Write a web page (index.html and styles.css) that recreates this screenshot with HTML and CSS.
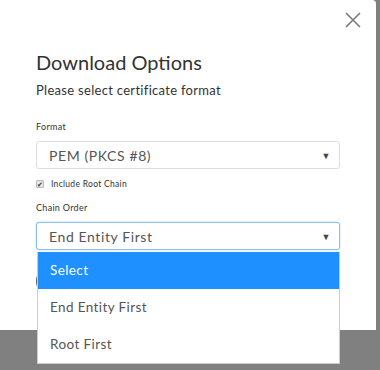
FILE: index.html
```html
<!DOCTYPE html>
<html lang="en">
<head>
    <meta charset="UTF-8">
    <title>Download Options</title>
    <link rel="stylesheet" href="styles.css">
</head>
<body>
    <div class="modal">
        <button class="close" aria-label="Close">
            <svg width="16" height="16" viewBox="0 0 16 16">
                <path d="M1 1 L15 15 M15 1 L1 15" stroke="#7a7a7a" stroke-width="1.6" fill="none"/>
            </svg>
        </button>

        <h1>Download Options</h1>
        <p class="subtitle">Please select certificate format</p>

        <div class="form-group">
            <label class="field-label">Format</label>
            <div class="select">
                <span>PEM (PKCS #8)</span>
                <span class="arrow">&#9660;</span>
            </div>
        </div>

        <label class="check">
            <span class="box">&#10004;</span>
            Include Root Chain
        </label>

        <div class="form-group">
            <label class="field-label">Chain Order</label>
            <div class="select-wrap">
                <div class="select focused">
                    <span>End Entity First</span>
                    <span class="arrow">&#9660;</span>
                </div>
                <ul class="options">
                    <li class="active">Select</li>
                    <li>End Entity First</li>
                    <li>Root First</li>
                </ul>
            </div>
        </div>

        <!-- download button sits under the open dropdown -->
        <div class="actions">
            <button class="btn" aria-label="Download"></button>
        </div>
    </div>
</body>
</html>
```

FILE: styles.css
```css
* {
    box-sizing: border-box;
    margin: 0;
    padding: 0;
}

html,
body {
    height: 100%;
}

body {
    background-color: #808080;
    font-family: 'Lato', 'Open Sans', sans-serif;
    color: #333;
}

.modal {
    position: relative;
    width: 376px;
    height: 330px;
    background: white;
    border-top-right-radius: 4px;
    padding: 49px 36px 0 36px;
}

.close {
    position: absolute;
    top: 12px;
    right: 15px;
    border: none;
    background: none;
    cursor: pointer;
}

h1 {
    font-size: 20px;
    font-weight: 400;
    color: #333;
    line-height: 26px;
}

.subtitle {
    margin-top: 7px;
    font-size: 13px;
    letter-spacing: 0.3px;
    color: #333;
    margin-bottom: 23px;
}

.field-label {
    display: block;
    font-size: 9px;
    letter-spacing: 0.3px;
    color: #333;
    margin-bottom: 9px;
}

.select {
    height: 28px;
    width: 304px;
    border: 1px solid #ddd;
    border-radius: 3px;
    padding: 0 8px 0 12px;
    display: flex;
    align-items: center;
    justify-content: space-between;
    font-size: 14px;
    letter-spacing: 0.6px;
    color: #555;
    background: white;
}

.select.focused {
    border: 1px solid #8ebfee;
    box-shadow: 0 0 2px rgba(102, 175, 233, 0.6);
}

.arrow {
    font-size: 9px;
    color: #444;
}

.check {
    display: flex;
    align-items: center;
    gap: 7px;
    font-size: 8.5px;
    letter-spacing: 0.3px;
    color: #333;
    margin: 10px 0 13px;
}

.box {
    width: 8px;
    height: 8px;
    border: 1px solid #bbb;
    background: #e6e6e6;
    border-radius: 1px;
    font-size: 7px;
    line-height: 7px;
    text-align: center;
    color: #333;
}

.select-wrap {
    position: relative;
}

.options {
    position: absolute;
    top: 30px;
    left: 1px;
    width: 303px;
    list-style: none;
    background: white;
    border: 1px solid #ccc;
    border-top: none;
    z-index: 100;
}

.options li {
    height: 37px;
    line-height: 37px;
    padding-left: 12px;
    font-size: 13.5px;
    letter-spacing: 0.4px;
    color: #555;
    background: white;
}

.options li.active {
    background: #1e90ff;
    color: white;
}

.actions {
    margin-top: 16px;
}

.btn {
    height: 30px;
    width: 110px;
    border: none;
    border-radius: 15px;
    background: #555;
}
```
